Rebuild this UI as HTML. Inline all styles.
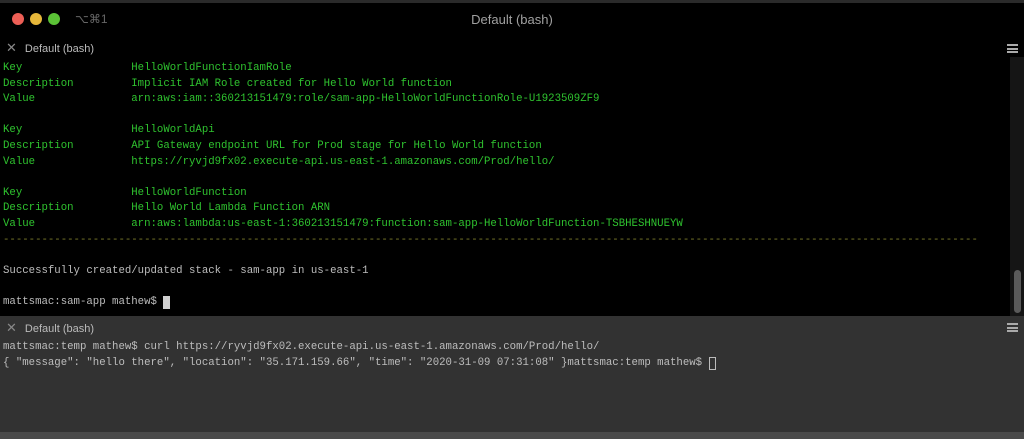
<!DOCTYPE html>
<html><head><style>
*{margin:0;padding:0;box-sizing:border-box}
body{width:1024px;height:439px;background:#000;position:relative;overflow:hidden;font-family:"Liberation Sans",sans-serif}
.topline{position:absolute;left:0;top:0;width:1024px;height:3px;background:#2a2a2a}
.dot{position:absolute;top:13px;width:12px;height:12px;border-radius:50%}
.title{position:absolute;top:12px;left:0;width:1024px;text-align:center;color:#a0a0a0;font-size:13px}
.cmd{position:absolute;left:75px;top:12px;color:#666;font-size:12px}
.tab{position:absolute;left:6px;color:#bbb;font-size:11px}
.tab span{color:#888;margin-right:8px;font-size:13px}
pre{position:absolute;left:3px;font-family:"Liberation Mono",monospace;font-size:10.7px;line-height:15.6px;color:#bdbdbd}
.g{color:#2fc32f}
.d{color:#7d7d2b}
.cur{display:inline-block;width:7px;height:13px;background:#d0d0d0;vertical-align:top;margin-top:1px}
.cur2{display:inline-block;width:7px;height:13px;border:1px solid #bbb;vertical-align:top;margin-top:1px}
.bottom{position:absolute;left:0;top:316px;width:1024px;height:116px;background:#323232}
.strip{position:absolute;left:0;top:432px;width:1024px;height:7px;background:#4a4a4a}
.ham{position:absolute;right:6px;width:11px}
.ham i{display:block;height:2px;background:#aaa;margin-bottom:1.5px}
.sb{position:absolute;left:1010px;top:57px;width:14px;height:259px;background:#151515}
.thumb{position:absolute;left:1014px;top:270px;width:7px;height:43px;background:#5a5a5a;border-radius:4px}
</style></head><body>
<div class="topline"></div>
<div class="dot" style="left:12px;background:#ed5f56"></div>
<div class="dot" style="left:30px;background:#e6b73a"></div>
<div class="dot" style="left:48px;background:#5bc236"></div>
<div class="cmd">⌥⌘1</div>
<div class="title">Default (bash)</div>
<div class="tab" style="top:40px"><span>✕</span>Default (bash)</div>
<div class="ham" style="top:44px"><i></i><i></i><i></i></div>
<div class="sb"></div><div class="thumb"></div>
<pre style="top:61px"><span class="g">Key                 HelloWorldFunctionIamRole
Description         Implicit IAM Role created for Hello World function
Value               arn:aws:iam::360213151479:role/sam-app-HelloWorldFunctionRole-U1923509ZF9

Key                 HelloWorldApi
Description         API Gateway endpoint URL for Prod stage for Hello World function
Value               https://ryvjd9fx02.execute-api.us-east-1.amazonaws.com/Prod/hello/

Key                 HelloWorldFunction
Description         Hello World Lambda Function ARN
Value               arn:aws:lambda:us-east-1:360213151479:function:sam-app-HelloWorldFunction-TSBHESHNUEYW</span>
<span class="d">--------------------------------------------------------------------------------------------------------------------------------------------------------</span>

Successfully created/updated stack - sam-app in us-east-1

mattsmac:sam-app mathew$ <span class="cur"></span></pre>
<div class="bottom">
<div class="tab" style="top:4px"><span>✕</span>Default (bash)</div>
<div class="ham" style="top:7px"><i></i><i></i><i></i></div>
<pre style="top:24px">mattsmac:temp mathew$ curl https://ryvjd9fx02.execute-api.us-east-1.amazonaws.com/Prod/hello/
{ "message": "hello there", "location": "35.171.159.66", "time": "2020-31-09 07:31:08" }mattsmac:temp mathew$ <span class="cur2"></span></pre>
</div>
<div class="strip"></div>
</body></html>
